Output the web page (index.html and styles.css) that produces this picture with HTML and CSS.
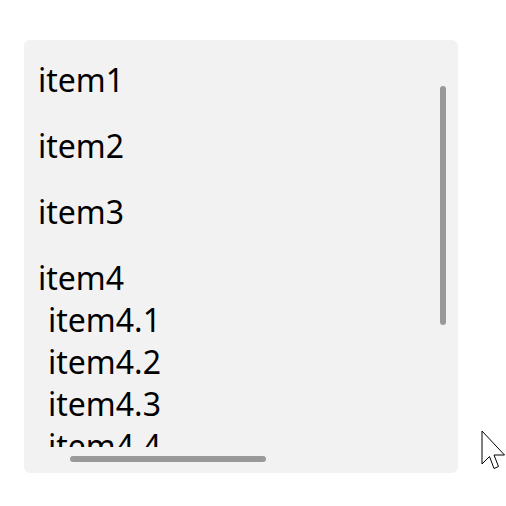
FILE: index.html
```html
<!DOCTYPE html>
<html>
<head>
<meta charset="utf-8">
<link rel="stylesheet" href="styles.css">
</head>
<body>
<div class="panel">
  <div class="viewport">
    <ul class="tree">
      <li class="top">item1</li>
      <li class="top">item2</li>
      <li class="top">item3</li>
      <li class="top">item4
        <ul class="sub">
          <li>item4.1</li>
          <li>item4.2</li>
          <li>item4.3</li>
          <li>item4.4</li>
        </ul>
      </li>
    </ul>
  </div>
  <div class="vbar"></div>
  <div class="hbar"></div>
</div>
<svg class="cursor" width="26" height="42" viewBox="0 0 26 42">
  <path d="M1 1 L1 34 L8.5 26.5 L13 38.5 L17.5 36.5 L13 25 L23.5 25 Z" fill="#fff" stroke="#000" stroke-width="1" stroke-linejoin="miter"/>
</svg>
</body>
</html>
```
FILE: styles.css
```css
html, body {
  margin: 0;
  padding: 0;
  background: #ffffff;
}
body {
  width: 506px;
  height: 506px;
  position: relative;
  overflow: hidden;
  font-family: "Noto Sans", "Open Sans", sans-serif;
}
.panel {
  position: relative;
  margin: 40px 0 0 24px;
  width: 434px;
  height: 433px;
  background: #f2f2f2;
  border-radius: 6px;
}
.viewport {
  height: 407px;
  overflow: hidden;
  padding: 19px 0 0 14px;
  box-sizing: border-box;
}
.tree, .sub {
  list-style: none;
  margin: 0;
  padding: 0;
}
.tree {
  font-size: 32px;
  line-height: 42px;
  color: #000;
}
.top {
  margin-bottom: 24px;
}
.sub {
  padding-left: 10px;
}
.vbar {
  position: absolute;
  left: 416px;
  top: 46px;
  width: 6px;
  height: 239px;
  background: #999;
  border-radius: 3px;
}
.hbar {
  position: absolute;
  left: 46px;
  top: 416px;
  width: 196px;
  height: 6px;
  background: #999;
  border-radius: 3px;
}
.cursor {
  position: absolute;
  left: 481px;
  top: 430px;
}
```
